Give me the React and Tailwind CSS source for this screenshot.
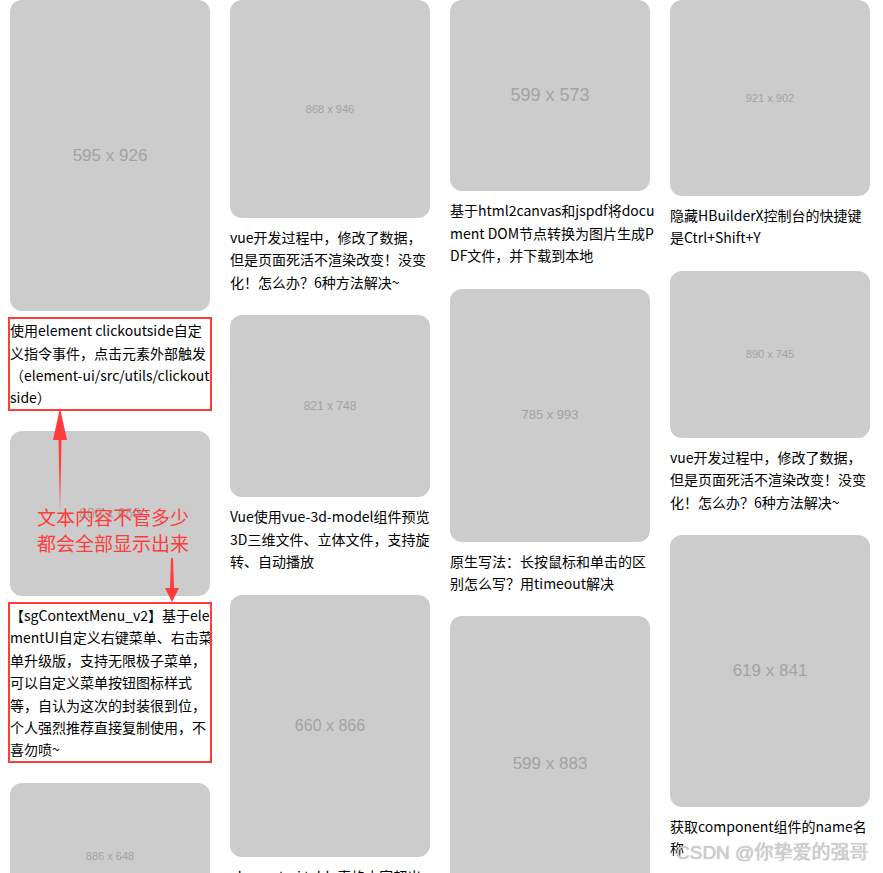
import React from 'react';

const columns = [
  [
    {
      w: 595, h: 926, size: 17, red: true,
      lines: ['使用element clickoutside自定', '义指令事件，点击元素外部触发', '（element-ui/src/utils/clickout', 'side）'],
    },
    {
      w: 800, h: 660, size: 14, red: true,
      lines: [
        '【sgContextMenu_v2】基于ele',
        'mentUI自定义右键菜单、右击菜',
        '单升级版，支持无限极子菜单，',
        '可以自定义菜单按钮图标样式',
        '等，自认为这次的封装很到位，',
        '个人强烈推荐直接复制使用，不',
        '喜勿喷~',
      ],
    },
    { w: 886, h: 648, size: 11, lines: ['element-ui表格自定义列', '显示隐藏'] },
  ],
  [
    { w: 868, h: 946, size: 11, lines: ['vue开发过程中，修改了数据，', '但是页面死活不渲染改变！没变', '化！怎么办？6种方法解决~'] },
    { w: 821, h: 748, size: 12, lines: ['Vue使用vue-3d-model组件预览', '3D三维文件、立体文件，支持旋', '转、自动播放'] },
    { w: 660, h: 866, size: 16, lines: ['element-ui table表格内容超出', '隐藏显示省略号'] },
  ],
  [
    { w: 599, h: 573, size: 18, lines: ['基于html2canvas和jspdf将docu', 'ment DOM节点转换为图片生成P', 'DF文件，并下载到本地'] },
    { w: 785, h: 993, size: 13, lines: ['原生写法：长按鼠标和单击的区', '别怎么写？用timeout解决'] },
    { w: 599, h: 883, size: 17, lines: ['获取浏览器地址栏参数'] },
  ],
  [
    { w: 921, h: 902, size: 11, lines: ['隐藏HBuilderX控制台的快捷键', '是Ctrl+Shift+Y'] },
    { w: 890, h: 745, size: 11, lines: ['vue开发过程中，修改了数据，', '但是页面死活不渲染改变！没变', '化！怎么办？6种方法解决~'] },
    { w: 619, h: 841, size: 17, lines: ['获取component组件的name名', '称'] },
  ],
];

const Card = ({ item }) => (
  <div className="mb-[22px]">
    <div
      className="w-[200px] rounded-xl bg-[#cccccc] flex items-center justify-center"
      style={{ height: (200 * item.h) / item.w }}
    >
      <span
        className="text-[#a3a3a3] font-['Liberation_Sans',Arial,sans-serif]"
        style={{ fontSize: item.size }}
      >
        {item.w} x {item.h}
      </span>
    </div>
    <div
      className={`mt-2 text-[14px] leading-[22.4px] text-black font-['Noto_Sans_CJK_SC',sans-serif] ${
        item.red ? 'outline-2 outline-[#ff3b3b]' : ''
      }`}
    >
      {item.lines.map((line, i) => (
        <div key={i} className="whitespace-nowrap">{line}</div>
      ))}
    </div>
  </div>
);

export default function App() {
  return (
    <div className="relative h-[873px] w-[883px] overflow-hidden bg-white">
      <div className="flex gap-5 pl-[10px]">
        {columns.map((col, ci) => (
          <div key={ci} className="w-[200px] flex flex-col">
            {col.map((item, i) => (
              <Card key={i} item={item} />
            ))}
          </div>
        ))}
      </div>

      <svg className="absolute left-0 top-0 pointer-events-none" width="883" height="873">
        <polygon points="60,408 53,440 58.5,440 60,512 61.5,440 67,440" fill="#ff3b3b" />
        <polygon points="171,558 173,558 174,588 179,588 172,602 165,588 170,588" fill="#ff3b3b" />
      </svg>

      <div className="absolute left-[37px] top-[504px] text-[19px] leading-[26px] text-[#ff3b3b] font-['Noto_Sans_CJK_SC',sans-serif]">
        <div>文本内容不管多少</div>
        <div>都会全部显示出来</div>
      </div>

      <div className="absolute left-[676px] top-[840px] text-[19px] leading-[26px] font-normal text-[#cfcfcf] font-['Liberation_Sans','Noto_Sans_CJK_SC',sans-serif] [text-shadow:0_0_1px_rgba(0,0,0,0.35)]">
        CSDN @你挚爱的强哥
      </div>
    </div>
  );
}
